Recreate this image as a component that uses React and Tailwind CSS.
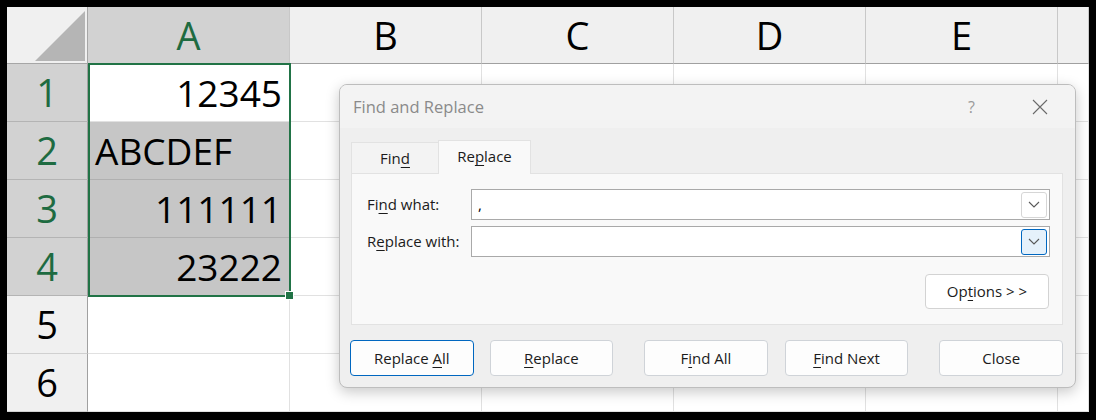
import React from "react";

const U = ({ children }) => <span className="underline underline-offset-[3px] decoration-1">{children}</span>;

function Chevron() {
  return (
    <svg width="12" height="7" viewBox="0 0 12 7" fill="none">
      <path d="M1 1l5 5 5-5" stroke="#5a5a5a" strokeWidth="1.1" />
    </svg>
  );
}

function Combo({ value, focused }) {
  return (
    <div className="flex-1 h-[31px] flex items-center border border-[#a9a9a9] bg-white pl-[6px] pr-[2px]">
      <span className="flex-1 text-[15px] text-black">{value}</span>
      <div
        className={
          focused
            ? "w-[26px] h-[26px] flex items-center justify-center rounded-[3px] border border-[#0067c0] bg-[#e5f1fb]"
            : "w-[26px] h-[26px] flex items-center justify-center rounded-[3px] border border-[#d6d6d6] bg-white"
        }
      >
        <Chevron />
      </div>
    </div>
  );
}

function Btn({ children, primary, className = "" }) {
  return (
    <div
      className={
        "w-[124px] h-[36px] flex items-center justify-center rounded-[4px] bg-[#fdfdfd] text-[15px] text-[#1b1b1b] " +
        (primary ? "border border-[#0067c0] " : "border border-[#cfd3d8] ") +
        className
      }
    >
      <span>{children}</span>
    </div>
  );
}

export default function App() {
  const colHeads = ["A", "B", "C", "D", "E", ""];
  const data = [
    { v: "12345", right: true },
    { v: "ABCDEF", right: false },
    { v: "111111", right: true },
    { v: "23222", right: true },
    { v: "", right: true },
    { v: "", right: true },
  ];

  return (
    <div className="w-[1096px] h-[420px] bg-black pt-[7px] pl-[7px] pr-[7px] pb-[8px] font-['Open_Sans',sans-serif]">
      <div className="relative w-full h-full bg-white overflow-hidden">
        <div className="grid grid-cols-[81px_202px_192px_192px_192px_192px_1fr] grid-rows-[57px_repeat(6,58px)]">
          {/* corner */}
          <div className="relative bg-[#f0f0f0] border-r border-b border-[#a6a6a6]">
            <svg className="absolute right-[2px] bottom-[2px]" width="50" height="50" viewBox="0 0 50 50">
              <path d="M50 0L50 50L0 50Z" fill="#b5b5b5" />
            </svg>
          </div>
          {colHeads.map((c, i) => (
            <div
              key={c + i}
              className={
                (i === 0 ? "bg-[#d2d2d2] text-[#1e6b41] " : "bg-[#f0f0f0] text-black ") +
                "flex items-center justify-center text-[38px] border-r border-[#c8c8c8] border-b border-b-[#a0a0a0]"
              }
            >
              {c}
            </div>
          ))}
          {data.map((r, ri) => {
            const sel = ri < 4;
            return (
              <React.Fragment key={ri}>
                <div
                  className={
                    (sel ? "bg-[#d2d2d2] text-[#1e6b41] border-b-[#b4b4b4] " : "bg-[#f0f0f0] text-black border-b-[#d0d0d0] ") +
                    "flex items-center justify-center text-[38px] border-b border-r border-r-[#a0a0a0]"
                  }
                >
                  {ri + 1}
                </div>
                <div
                  className={
                    (ri === 0 ? "bg-white border-b-[#e1e1e1] " : sel ? "bg-[#c6c6c6] border-b-[#b0b0b0] " : "bg-white border-b-[#e1e1e1] ") +
                    (r.right ? "justify-end pr-[7px] " : "justify-start pl-[7px] ") +
                    "flex items-center text-[37px] text-black border-b border-r border-r-[#e1e1e1]"
                  }
                >
                  {r.v}
                </div>
                {[0, 1, 2, 3, 4].map((k) => (
                  <div key={k} className="border-b border-r border-[#e1e1e1]" />
                ))}
              </React.Fragment>
            );
          })}
        </div>

        {/* selection */}
        <div className="absolute left-[81px] top-[56px] w-[203px] h-[234px] border-2 border-[#217346]" />
        <div className="absolute left-[278px] top-[284px] w-[9px] h-[9px] bg-[#217346] border border-white" />

        {/* dialog */}
        <div className="absolute left-[332px] top-[77px] w-[737px] h-[304px] rounded-[8px] border border-[#bdbdbd] bg-[#efefef] shadow-[0_4px_14px_rgba(0,0,0,0.22)] overflow-hidden flex flex-col">
          <div className="h-[43px] bg-[#f3f3f3] flex items-center pl-[13px] shrink-0">
            <span className="flex-1 text-[16.5px] text-[#8a8a8a] pt-[1px]">Find and Replace</span>
            <span className="text-[16px] text-[#9a9a9a] mr-[57px]">?</span>
            <svg className="mr-[27px]" width="16" height="16" viewBox="0 0 16 16">
              <path d="M1 1L15 15M15 1L1 15" stroke="#6a6a6a" strokeWidth="1.1" />
            </svg>
          </div>
          <div className="pl-[11px] pr-[12px] pt-[12px] flex flex-col">
            <div className="flex items-end relative z-10 h-[34px]">
              <div className="w-[88px] h-[31px] mb-px flex items-center justify-center bg-[#f3f3f3] border border-b-0 border-[#e2e2e2] text-[15px] text-[#1b1b1b]">
                <span>Fin<U>d</U></span>
              </div>
              <div className="w-[93px] h-[34px] flex items-center justify-center bg-[#f9f9f9] border border-b-0 border-[#e2e2e2] text-[15px] text-[#1b1b1b] -ml-px pb-[2px]">
                <span>Re<U>p</U>lace</span>
              </div>
            </div>
            <div className="h-[152px] -mt-px bg-[#f9f9f9] border border-[#e2e2e2] pt-[15px] pl-[15px] pr-[12px] flex flex-col">
              <div className="flex items-center">
                <span className="w-[104px] text-[15px] text-[#1b1b1b]">Fi<U>n</U>d what:</span>
                <Combo value="," />
              </div>
              <div className="flex items-center mt-[6px]">
                <span className="w-[104px] text-[15px] text-[#1b1b1b]">R<U>e</U>place with:</span>
                <Combo value="" focused />
              </div>
              <div className="flex justify-end mt-[17px] pr-[1px]">
                <div className="w-[124px] h-[35px] flex items-center justify-center rounded-[4px] bg-white border border-[#d3d3d3] text-[15px] text-[#1b1b1b]">
                  <span>Op<U>t</U>ions &gt; &gt;</span>
                </div>
              </div>
            </div>
            <div className="flex mt-[15px] -ml-[1px]">
              <Btn primary>Replace <U>A</U>ll</Btn>
              <Btn className="ml-[16px]"><U>R</U>eplace</Btn>
              <Btn className="ml-[31px]">F<U>i</U>nd All</Btn>
              <Btn className="ml-[17px]"><U>F</U>ind Next</Btn>
              <Btn className="ml-[31px]">Close</Btn>
            </div>
          </div>
        </div>
      </div>
    </div>
  );
}
